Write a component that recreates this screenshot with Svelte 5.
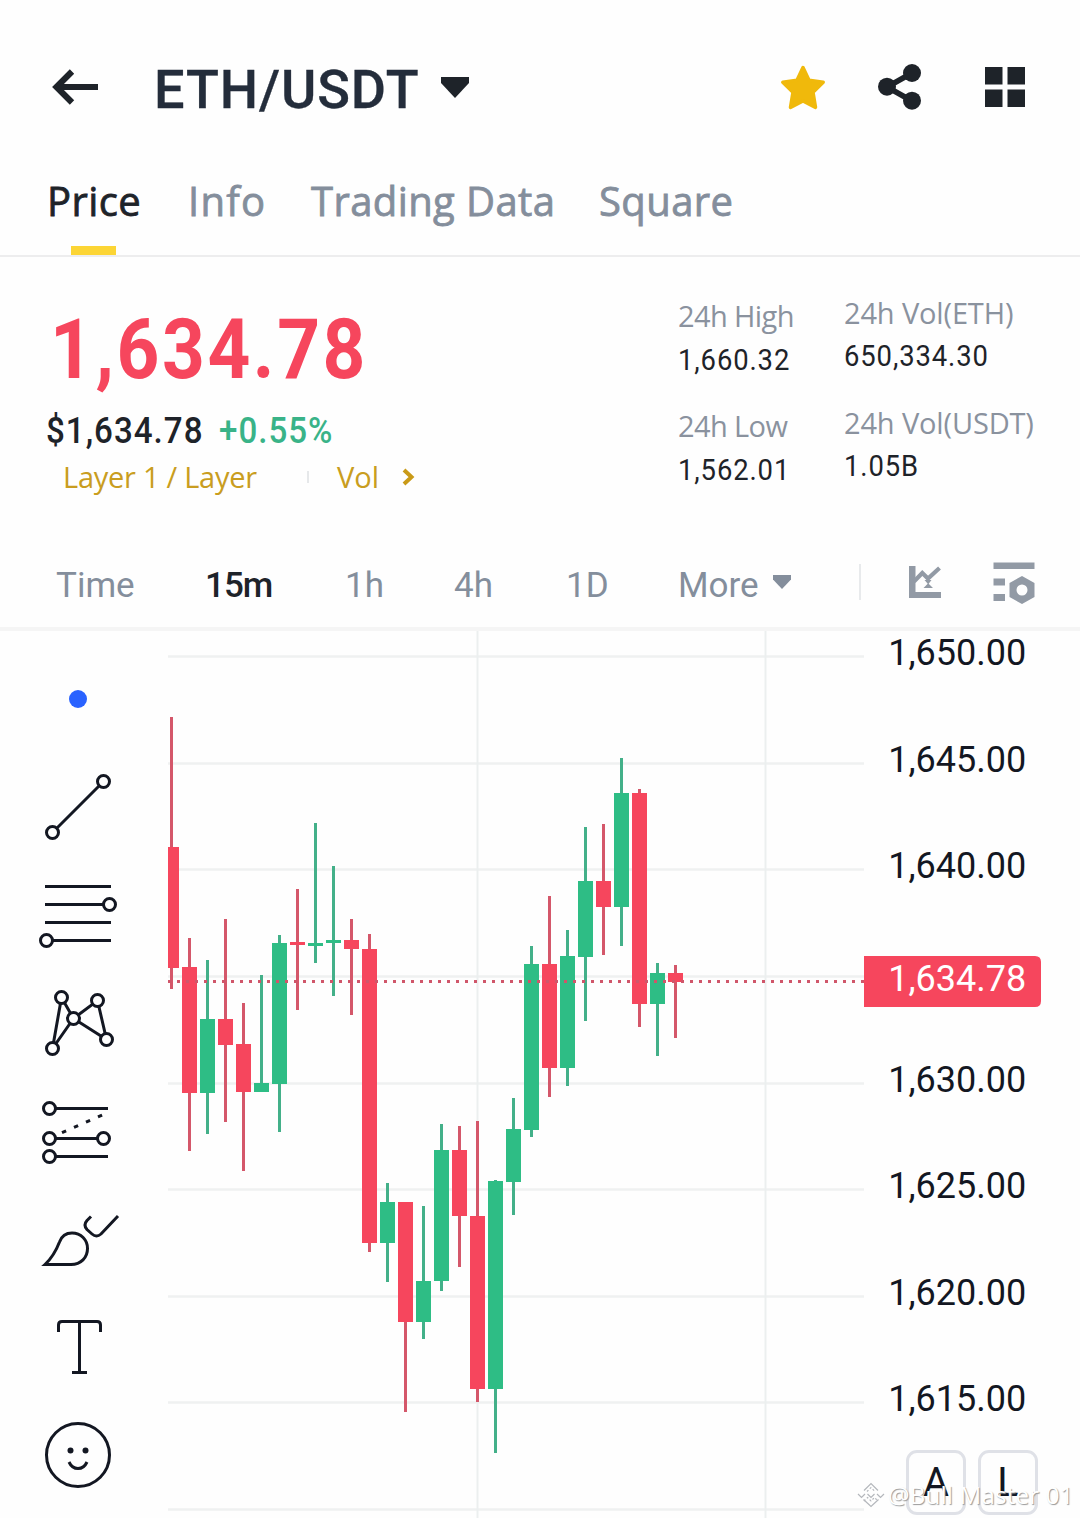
<script lang="ts">
	type Candle = [high: number, top: number, bottom: number, low: number, up: number];

	const tabs = ['Price', 'Info', 'Trading Data', 'Square'];
	const intervals = ['Time', '15m', '1h', '4h', '1D'];

	const stats = [
		[
			{ label: '24h High', value: '1,660.32' },
			{ label: '24h Low', value: '1,562.01' }
		],
		[
			{ label: '24h Vol(ETH)', value: '650,334.30' },
			{ label: '24h Vol(USDT)', value: '1.05B' }
		]
	];

	let activeTab = $state('Price');
	let activeInterval = $state('15m');

	// chart geometry, in page pixels
	const candles: Candle[] = [
		[717, 847, 968, 989, 0],
		[938, 967, 1093, 1151, 0],
		[960, 1019, 1093, 1134, 1],
		[919, 1019, 1045, 1122, 0],
		[1003, 1044, 1092, 1171, 0],
		[975, 1083, 1092, 1092, 1],
		[935, 943, 1084, 1132, 1],
		[889, 942, 945, 1010, 0],
		[823, 943, 946, 963, 1],
		[866, 940, 943, 996, 1],
		[919, 940, 949, 1015, 0],
		[934, 949, 1243, 1252, 0],
		[1183, 1202, 1243, 1282, 1],
		[1202, 1202, 1322, 1412, 0],
		[1206, 1281, 1322, 1339, 1],
		[1124, 1150, 1281, 1291, 1],
		[1126, 1150, 1216, 1267, 0],
		[1121, 1216, 1389, 1402, 0],
		[1180, 1181, 1389, 1453, 1],
		[1098, 1129, 1182, 1215, 1],
		[946, 964, 1130, 1137, 1],
		[896, 964, 1068, 1097, 0],
		[930, 956, 1068, 1086, 1],
		[827, 881, 957, 1021, 1],
		[824, 881, 907, 955, 0],
		[758, 793, 907, 946, 1],
		[789, 793, 1004, 1027, 0],
		[963, 973, 1004, 1056, 1],
		[965, 973, 982, 1038, 0]
	];
	const gridRows = [656.5, 763.5, 869.5, 976.5, 1083.5, 1189.5, 1296.5, 1402.5, 1509.5];
	const gridCols = [477.5, 765.5];
	const axis = [
		{ y: 665, text: '1,650.00' },
		{ y: 772, text: '1,645.00' },
		{ y: 878, text: '1,640.00' },
		{ y: 1092, text: '1,630.00' },
		{ y: 1198, text: '1,625.00' },
		{ y: 1305, text: '1,620.00' },
		{ y: 1411, text: '1,615.00' }
	];
</script>

<main class="screen">
	<header class="header">
		<svg class="back" width="48" height="40" viewBox="0 0 48 40">
			<path d="M46 20H5M20 4.500L4.500 20 20 35.500" fill="none" stroke="#1e2329" stroke-width="6.200" />
		</svg>
		<h1 class="pair">ETH/USDT</h1>
		<svg class="caret" width="28" height="22" viewBox="0 0 28 22">
			<path d="M0 0h28v6L14 21 0 6z" fill="#1e2329" />
		</svg>
		<div class="actions">
			<svg class="star" width="48" height="48" viewBox="0 0 48 48">
				<path
					d="M24 3.500l6 12.700 14.200 2-10.200 10 2.500 15.200L24 37 11.500 43.400l2.500-15.200-10.200-10 14.200-2z"
					fill="#f0b90b"
					stroke="#f0b90b"
					stroke-width="3.500"
					stroke-linejoin="round"
				/>
			</svg>
			<svg class="share" width="46" height="48" viewBox="0 0 46 48">
				<path d="M36 10L11 24l25 14" fill="none" stroke="#1e2329" stroke-width="5.500" />
				<circle cx="11" cy="23.700" r="9" fill="#1e2329" />
				<circle cx="36" cy="10" r="9" fill="#1e2329" />
				<circle cx="36" cy="37.700" r="9" fill="#1e2329" />
			</svg>
			<svg width="40" height="40" viewBox="0 0 40 40">
				<path d="M0 0h17.500v17.500H0zM22.500 0H40v17.500H22.500zM0 22.500h17.500V40H0zM22.500 22.500H40V40H22.500z" fill="#1e2329" />
			</svg>
		</div>
	</header>

	<nav class="tabs">
		{#each tabs as tab (tab)}
			<button class="tab" class:active={tab === activeTab} onclick={() => (activeTab = tab)}>
				<span>{tab}</span>
			</button>
		{/each}
	</nav>

	<section class="quote">
		<div class="quote-main">
			<div class="last">1,634.78</div>
			<div class="fiat">
				<span class="fiat-price">$1,634.78</span>
				<span class="change">+0.55%</span>
			</div>
			<div class="tags">
				<span class="tag-layer">Layer 1 / Layer</span>
				<span class="tag-divider"></span>
				<span class="tag-vol">Vol</span>
				<svg width="14" height="18" viewBox="0 0 14 18">
					<path d="M2 2l7.500 7L2 16" fill="none" stroke="#c99a17" stroke-width="4" />
				</svg>
			</div>
		</div>
		{#each stats as column}
			<dl class="stats">
				{#each column as stat (stat.label)}
					<div class="stat">
						<dt>{stat.label}</dt>
						<dd>{stat.value}</dd>
					</div>
				{/each}
			</dl>
		{/each}
	</section>

	<div class="intervals">
		{#each intervals as interval (interval)}
			<button
				class="interval"
				class:active={interval === activeInterval}
				onclick={() => (activeInterval = interval)}>{interval}</button
			>
		{/each}
		<button class="interval more">
			More
			<svg width="18" height="14" viewBox="0 0 18 14"><path d="M0 0h18v4.500L9 14 0 4.500z" fill="#848e9c" /></svg>
		</button>
		<span class="interval-divider"></span>
		<svg class="indicator" width="32" height="32" viewBox="0 0 32 32">
			<path d="M0 0h6.500v26H32v6H0z" fill="#929aa5" />
			<path d="M5 15.500l8.300-8.500 5.700 5.500L30.500 2" fill="none" stroke="#929aa5" stroke-width="4.200" />
			<path d="M15.500 14h7L19.700 17.700l4.300 4.300h-9.500l4.200-4.300z" fill="#929aa5" />
		</svg>
		<svg class="settings" width="42" height="42" viewBox="0 0 42 42">
			<path d="M.5 0.500h41V7H.5zM.5 16.500H12v7H.5zM.5 32H12v7H.5z" fill="#929aa5" />
			<path
				d="M29 14l12.500 7v14L29 42l-12.500-7V21zM29 22.500a5.500 5.500 0 1 0 0 11 5.500 5.500 0 0 0 0-11z"
				fill="#929aa5"
				fill-rule="evenodd"
			/>
		</svg>
	</div>

	<section class="chart">
		<div class="tools">
			<svg viewBox="0 0 108 108"><circle cx="54" cy="54" r="9" fill="#2962ff" /></svg>
			<svg viewBox="0 0 108 108">
				<path d="M33 75l42-42" />
				<circle cx="28.500" cy="79.500" r="6" />
				<circle cx="79.500" cy="28.500" r="6" />
			</svg>
			<svg viewBox="0 0 108 108">
				<path d="M21 25.500h66M21 43.500h58M21 61.500h66M29 79.500h58" />
				<circle cx="85.500" cy="43.500" r="6" />
				<circle cx="22.500" cy="79.500" r="6" />
			</svg>
			<svg viewBox="0 0 108 108">
				<path d="M37.500 28.500l12 21 24-18 9 39-33-21-21 30z" />
				<circle cx="37.500" cy="28.500" r="6" />
				<circle cx="73.500" cy="31.500" r="6" />
				<circle cx="49.500" cy="49.500" r="6" />
				<circle cx="28.500" cy="79.500" r="6" />
				<circle cx="82.500" cy="70.500" r="6" />
			</svg>
			<svg viewBox="0 0 108 108">
				<path d="M31 31.500h53M31 61.500h43M31 79.500h53" />
				<path d="M38 55.700l42-18.500" stroke-dasharray="4.500 8.600" />
				<circle cx="25.500" cy="31.500" r="6" />
				<circle cx="25.500" cy="61.500" r="6" />
				<circle cx="79.500" cy="61.500" r="6" />
				<circle cx="25.500" cy="79.500" r="6" />
			</svg>
			<svg viewBox="0 0 108 108">
				<path d="M21 79.500h26c10 0 16.500-7 16.500-16 0-8.500-6.500-15.500-15.500-15.500-6 0-10.500 3.500-12.500 9C32 66 28 73 21 79.500z" />
				<path d="M67 31.500l-4 4q-4 4.500 0 9l5 4.500q4.500 4 9 0L94 31" />
			</svg>
			<svg viewBox="0 0 108 108">
				<path d="M34.500 39v-7q0-3.500 3.500-3.500h35q3.500 0 3.500 3.500v7M55.500 28.500v51M48 79.500h15" />
			</svg>
			<svg viewBox="0 0 108 108">
				<circle cx="54" cy="54" r="31.500" />
				<circle class="eye" cx="46.500" cy="49.500" r="3" />
				<circle class="eye" cx="61.500" cy="49.500" r="3" />
				<path d="M45 61q3 6.500 9 6.500t9-6.500" />
			</svg>
		</div>

		<svg class="plot" width="912" height="887" viewBox="168 631 912 887">
			{#each gridRows as y}
				<path d="M168 {y}H864" stroke="#eff1f1" stroke-width="2.400" />
			{/each}
			{#each gridCols as x}
				<path d="M{x} 627V1518" stroke="#ecefef" stroke-width="2" />
			{/each}
			{#each candles as [high, top, bottom, low, up], i}
				<rect x={170 + i * 18} y={high} width="3" height={low - high} fill={up ? '#43b089' : '#d4576a'} />
				<rect x={164 + i * 18} y={top} width="15" height={bottom - top} fill={up ? '#2ebd85' : '#f6465d'} />
			{/each}
			<path d="M168 981.500H864" stroke="#d0566a" stroke-width="3" stroke-dasharray="3 6" />
			{#each axis as tick (tick.text)}
				<text x="888.300" y={tick.y}>{tick.text}</text>
			{/each}
			<path d="M864 956h171q6 0 6 6v39q0 6-6 6H864z" fill="#f6465d" />
			<text class="current" x="888.300" y="991">1,634.78</text>
		</svg>

		<div class="scale">
			<button>A</button>
			<button>L</button>
		</div>

		<div class="watermark">
			<svg width="28" height="26" viewBox="0 0 28 26">
				<path d="M7 8.500l7-7 7 7M1 12l3.500 3.500L8 12M20 12l3.500 3.500L27 12M10.500 12l3.500 3.500 3.500-3.500M6.500 17.500l7.500 7 7.500-7" />
				<path d="M10 9.500l4-4 4 4M7 19l3.500-3.500L14 19l3.500-3.500L21 19" stroke-dasharray="2 2" />
			</svg>
			<span>@Bull Master 01</span>
		</div>
	</section>
</main>

<style>
	:global(body) {
		background: #fefefe;
	}

	.screen {
		width: 1080px;
		height: 1518px;
		overflow: hidden;
		background: #fefefe;
		color: #1e2329;
		font-family: Roboto, 'Liberation Sans', sans-serif;
	}

	button {
		padding: 0;
		border: 0;
		background: none;
		font: inherit;
		color: inherit;
		text-align: left;
	}

	svg {
		display: block;
		flex: none;
	}

	/* Header */
	.header {
		display: flex;
		align-items: center;
		height: 174px;
		padding: 0 55px 0 52px;
	}

	.pair {
		width: 287px;
		margin: 6px 0 0 54px;
		font-size: 54px;
		font-weight: 500;
		line-height: 60px;
		letter-spacing: 0.9px;
		color: #242d3b;
		-webkit-text-stroke: 0.3px #242d3b;
		white-space: nowrap;
	}

	.caret {
		margin-top: 1px;
	}

	.actions {
		display: flex;
		align-items: center;
		margin-left: auto;
	}

	.star {
		margin: 2px 49px 0 0;
	}

	.share {
		margin-right: 63px;
	}

	/* Tabs */
	.tabs {
		display: grid;
		grid-template-columns: 141px 123px 288px 200px;
		height: 81px;
		padding-left: 47px;
		border-bottom: 2px solid #ededee;
	}

	.tab {
		display: flex;
		font-family: 'Open Sans', sans-serif;
		font-size: 40px;
		line-height: 54px;
		letter-spacing: 0.4px;
		color: #848e9c;
		-webkit-text-stroke: 0.8px currentColor;
		white-space: nowrap;
	}

	.tab:nth-child(2) {
		letter-spacing: 1.3px;
	}

	.tab.active {
		position: relative;
		color: #1e2329;
	}

	.tab.active::after {
		content: '';
		position: absolute;
		left: 24px;
		bottom: 0;
		width: 45px;
		height: 9px;
		background: #fcd535;
	}

	/* Quote */
	.quote {
		display: flex;
		height: 283px;
	}

	.quote-main {
		width: 678px;
		padding: 49px 0 0 46px;
		box-sizing: border-box;
	}

	.last {
		font-size: 83px;
		font-weight: 700;
		line-height: 88px;
		letter-spacing: 2.9px;
		color: #f6465d;
		transform: translateX(4px) scaleX(0.9);
		transform-origin: left;
	}

	.fiat {
		display: flex;
		margin-top: 15px;
		font-size: 36px;
		font-weight: 500;
		line-height: 44px;
		letter-spacing: 1.1px;
	}

	.fiat span {
		transform: scaleX(0.92);
		transform-origin: left;
	}

	.fiat-price {
		width: 173px;
	}

	.change {
		color: #39b388;
	}

	.tags {
		display: flex;
		align-items: center;
		padding-left: 17px;
		font-family: 'Open Sans', sans-serif;
		font-size: 29px;
		line-height: 48px;
		color: #c99d20;
	}

	.tag-layer {
		width: 244px;
		letter-spacing: -0.25px;
	}

	.tag-divider {
		width: 2px;
		height: 12px;
		background: #e6e8ea;
	}

	.tag-vol {
		width: 65px;
		padding-left: 28px;
	}

	/* Stats */
	.stats {
		width: 166px;
		margin: 0;
		padding-top: 37px;
		white-space: nowrap;
	}

	.stats:last-child {
		padding-top: 34px;
	}

	.stat {
		height: 110px;
	}

	.stats:last-child .stat {
		height: 109.5px;
	}

	dt {
		font-family: 'Open Sans', sans-serif;
		font-size: 29px;
		line-height: 43px;
		letter-spacing: -0.6px;
		color: #8a929e;
	}

	.stats:last-child dt {
		letter-spacing: -0.15px;
	}

	dd {
		margin: 0;
		font-size: 29.5px;
		line-height: 46px;
		letter-spacing: 0.95px;
		transform: scaleX(0.93);
		transform-origin: left;
	}

	.stats:last-child dd {
		line-height: 44px;
	}

	/* Intervals */
	.intervals {
		display: grid;
		grid-template-columns: 149px 140px 109px 112px 112px 181px 50px 84px 42px;
		align-items: center;
		height: 87px;
		padding-left: 56px;
		border-bottom: 4px solid #f5f5f5;
	}

	.interval {
		padding-top: 4px;
		font-size: 35px;
		line-height: 48px;
		color: #848e9c;
	}

	.interval.active {
		font-weight: 500;
		letter-spacing: -1px;
		color: #1e2329;
	}

	.more {
		display: flex;
		align-items: center;
		gap: 14px;
	}

	.more svg {
		margin-bottom: 7px;
	}

	.interval-divider {
		width: 2px;
		height: 36px;
		margin-bottom: 4px;
		background: #e8eaec;
	}

	.indicator {
		margin-bottom: 4px;
	}

	.settings {
		margin-bottom: 2px;
	}

	/* Chart */
	.chart {
		position: relative;
		display: flex;
		height: 887px;
	}

	.tools {
		display: flex;
		flex-direction: column;
		width: 144px;
		padding: 14px 0 0 24px;
		box-sizing: border-box;
	}

	.tools svg {
		width: 108px;
		height: 108px;
		fill: none;
		stroke: #131722;
		stroke-width: 3;
	}

	.tools circle {
		fill: #fefefe;
	}

	.tools svg:first-child {
		stroke: none;
	}

	.tools svg:first-child circle {
		fill: #2962ff;
	}

	.tools .eye {
		fill: #131722;
		stroke: none;
	}

	.plot {
		margin-left: 24px;
	}

	.plot text {
		font-size: 36px;
		fill: #131722;
	}

	.plot .current {
		fill: #fff;
	}

	.scale {
		position: absolute;
		left: 906px;
		top: 819px;
		display: flex;
		gap: 12px;
	}

	.scale button {
		width: 60px;
		height: 65px;
		box-sizing: border-box;
		border: 3px solid #dfe1e7;
		border-radius: 11px;
		background: #fefefe;
		font-size: 40px;
		line-height: 57px;
		text-align: center;
		color: #131722;
	}

	.watermark {
		position: absolute;
		left: 857px;
		top: 847px;
		display: flex;
		align-items: center;
		gap: 3px;
		font-family: 'Open Sans', sans-serif;
		font-size: 24px;
		line-height: 34px;
		letter-spacing: 0.25px;
		color: #fff;
		text-shadow: 1px 1px 1px #999;
		white-space: nowrap;
	}

	.watermark svg {
		fill: none;
		stroke: #b4b7bc;
		stroke-width: 1.2;
	}
</style>
